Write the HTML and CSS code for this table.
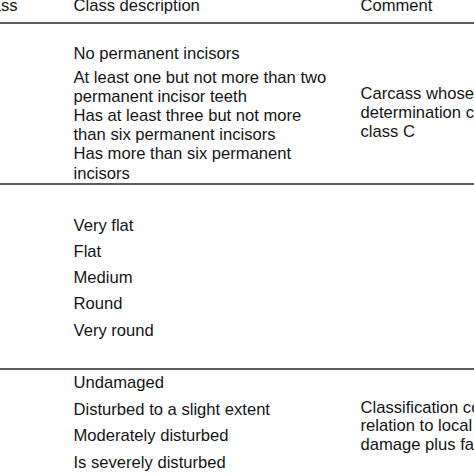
FILE: index.html
```html
<!DOCTYPE html>
<html lang="en">
<head>
<meta charset="utf-8">
<title>Carcass classification</title>
<link rel="stylesheet" href="styles.css">
</head>
<body>
<div class="table">
  <div class="row head">
    <div class="cell c-class">Class</div>
    <div class="cell c-desc">Class description</div>
    <div class="cell c-comm">Comment</div>
  </div>

  <div class="row r1">
    <div class="cell c-class"></div>
    <div class="cell c-desc">
      <p class="item first">No permanent incisors</p>
      <p class="item">At least one but not more than two<br>permanent incisor teeth</p>
      <p class="item">Has at least three but not more<br>than six permanent incisors</p>
      <p class="item">Has more than six permanent<br>incisors</p>
    </div>
    <div class="cell c-comm">Carcass whose dentition<br>determination cannot be made is<br>class C</div>
  </div>

  <div class="row r2">
    <div class="cell c-class"></div>
    <div class="cell c-desc">
      <p class="item">Very flat</p>
      <p class="item">Flat</p>
      <p class="item">Medium</p>
      <p class="item">Round</p>
      <p class="item">Very round</p>
    </div>
    <div class="cell c-comm"></div>
  </div>

  <div class="row r3">
    <div class="cell c-class"></div>
    <div class="cell c-desc">
      <p class="item">Undamaged</p>
      <p class="item">Disturbed to a slight extent</p>
      <p class="item">Moderately disturbed</p>
      <p class="item">Is severely disturbed</p>
    </div>
    <div class="cell c-comm">Classification conducted in<br>relation to local bruising<br>damage plus fat loss</div>
  </div>
</div>
</body>
</html>
```

FILE: styles.css
```css
html, body {
  margin: 0;
  padding: 0;
  background: #ffffff;
}

body {
  width: 474px;
  height: 474px;
  overflow: hidden;
  font-family: "Liberation Sans", Arial, sans-serif;
  font-size: 16.6px;
  color: #151515;
}

.table {
  width: 620px;
  margin-left: -24px;
  margin-top: -4px;
}

.row {
  display: grid;
  grid-template-columns: 97.5px 287px 1fr;
  align-items: center;
  border-bottom: 2px solid #5c5c5c;
}

.cell {
  line-height: 19.5px;
  white-space: nowrap;
}

.head {
  padding-bottom: 6px;
  line-height: 20px;
}

.item {
  margin: 0;
}

/* row 1: dentition */
.r1 {
  padding-top: 20.3px;
}
.r1 .item {
  line-height: 19.2px;
}
.r1 .item.first {
  margin-bottom: 4.5px;
}
.r1 .c-comm {
  line-height: 19px;
  margin-top: -2px;
}

/* row 2: shape */
.r2 {
  padding-top: 28px;
  padding-bottom: 24.5px;
}
.r2 .item {
  line-height: 26.2px;
}

/* row 3: damage */
.r3 {
  border-bottom: none;
}
.r3 .item {
  line-height: 26.6px;
}
.r3 .c-comm {
  line-height: 18.4px;
  padding-top: 6px;
}
```
